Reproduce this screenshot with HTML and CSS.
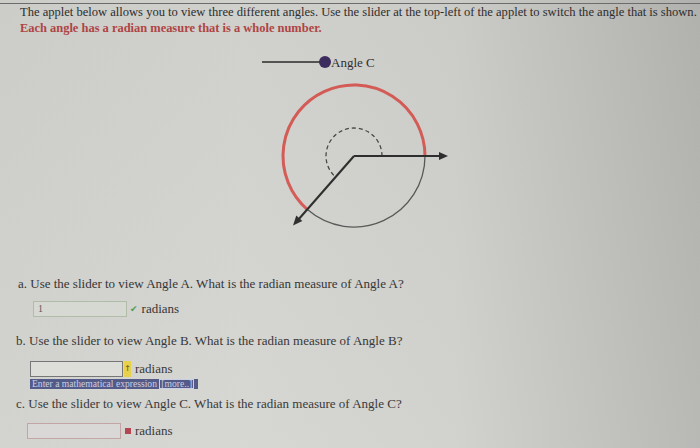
FILE: index.html
```html
<!DOCTYPE html>
<html>
<head>
<meta charset="utf-8">
<link rel="stylesheet" href="styles.css">
</head>
<body>
<div class="screen">
  <div class="frame">
    <p class="intro">The applet below allows you to view three different angles. Use the slider at the top-left of the applet to switch the angle that is shown.<br><b class="note">Each angle has a radian measure that is a whole number.</b></p>
    <svg class="applet" width="220" height="185" viewBox="240 48 220 185">
      <line x1="262" y1="62" x2="320" y2="62" stroke="#2a2a2a" stroke-width="1.6"/>
      <circle cx="325" cy="62" r="6" fill="#3b2b5e"/>
      <text x="331" y="66.5" class="label">Angle C</text>
      <path d="M425 156 A71 71 0 1 0 307.4 209.6" fill="none" stroke="#d65a55" stroke-width="3"/>
      <path d="M307.4 209.6 A71 71 0 0 0 425 156" fill="none" stroke="#555" stroke-width="1.3"/>
      <path d="M382 156 A28 28 0 1 0 335.6 177.1" fill="none" stroke="#444" stroke-width="1.3" stroke-dasharray="4 3"/>
      <line x1="354" y1="156" x2="441" y2="156" stroke="#2a2a2a" stroke-width="2"/>
      <polygon points="448,156 439,152 439,160" fill="#2a2a2a"/>
      <line x1="354" y1="156" x2="298" y2="220" stroke="#2a2a2a" stroke-width="2"/>
      <polygon points="293,225.5 296.3,215.6 302.3,220.9" fill="#2a2a2a"/>
    </svg>
    <p class="q qa">a. Use the slider to view Angle A. What is the radian measure of Angle A?</p>
    <div class="row rowa"><span class="box boxa">1</span><span class="check">✔</span><span class="unit">radians</span></div>
    <p class="q qb">b. Use the slider to view Angle B. What is the radian measure of Angle B?</p>
    <div class="row rowb"><span class="box boxb"></span><span class="hint">↑</span><span class="unit">radians</span></div>
    <div class="tip">Enter a mathematical expression <span class="more">[more..]</span></div>
    <p class="q qc">c. Use the slider to view Angle C. What is the radian measure of Angle C?</p>
    <div class="row rowc"><span class="box boxc"></span><span class="wrong"></span><span class="unit">radians</span></div>
  </div>
</div>
</body>
</html>
```
FILE: styles.css
```css
html, body { margin: 0; padding: 0; }
body { font-family: "Liberation Serif", "DejaVu Serif", serif; color: #2e2e2e; }
.screen {
  width: 700px; height: 448px; overflow: hidden; position: relative;
  background: linear-gradient(90deg, #d0d0cc 0%, #d4d4d0 35%, #cfcfcb 65%, #b4b4b1 100%);
}
.screen::after {
  content: ""; position: absolute; left: 0; top: 0; right: 0; bottom: 0;
  background: linear-gradient(180deg, rgba(0,0,0,0.02) 0%, rgba(255,255,255,0.06) 100%);
  pointer-events: none;
}
.frame {
  margin: 3px 0 0 0; border-top: 1px solid #6e6e6e; height: 444px;
  display: flex; flex-direction: column; align-items: flex-start;
}
.intro { margin: 0 0 0 20px; font-size: 12.55px; line-height: 16px; white-space: nowrap; }
.note { color: #b24545; font-size: 12.45px; }
.applet { display: block; margin: 12px 0 0 240px; }
.label { font-family: "Liberation Serif", serif; font-size: 13px; fill: #2e2e2e; }
.q { margin: 0; font-size: 13px; line-height: 16px; white-space: nowrap; }
.qa { margin: 43px 0 0 18px; }
.qb { margin: 16px 0 0 16px; }
.qc { margin: 7px 0 0 16px; }
.row { display: flex; align-items: center; height: 16px; font-size: 13px; }
.rowa { margin: 9px 0 0 33px; }
.rowb { margin: 12px 0 0 30px; }
.rowc { margin: 11px 0 0 27px; }
.box { box-sizing: border-box; width: 94px; height: 16px; display: block; font-size: 10px; line-height: 14px; padding-left: 4px; color: #555; }
.boxa { border: 1px solid #aebaa6; background: #d6d8d2; }
.boxb { border: 1px solid #707070; background: #dcdcd8; width: 93px; }
.boxc { border: 1px solid #bfa0a0; background: #d8d6d4; }
.check { color: #4d9a3c; font-family: "DejaVu Sans", sans-serif; font-size: 9px; margin: 0 4px 0 3px; }
.hint { width: 7px; height: 16px; background: #e6cf44; font-size: 8px; line-height: 16px; text-align: center; color: #5a4a10; margin: 0 4px 0 1px; font-family: "DejaVu Sans", sans-serif; }
.wrong { width: 6px; height: 6px; background: #b23a48; margin: 0 4px 0 4px; }
.unit { font-size: 13px; }
.tip { margin: 2px 0 0 30px; background: #4a5283; color: #c9cde2; font-size: 9.6px; line-height: 10px; height: 10px; width: 168px; box-sizing: border-box; padding-left: 2px; white-space: nowrap; overflow: hidden; }
.more { border: 1px solid #c9cde2; padding: 0 1px; line-height: 8px; display: inline-block; }
```
